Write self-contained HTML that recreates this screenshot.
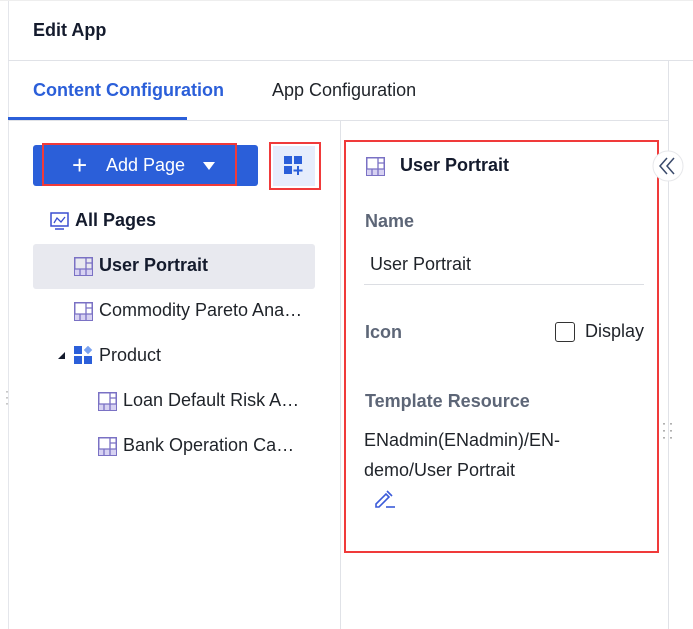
<!DOCTYPE html>
<html><head><style>
body{margin:0;width:693px;height:629px;background:#fff;font-family:"Liberation Sans",sans-serif;position:relative;overflow:hidden;color:#1f2329}
.a{position:absolute}
.t{position:absolute;white-space:nowrap}
</style></head><body>
<div class="a" style="left:8px;top:0;width:1px;height:629px;background:#e4e6eb"></div>
<div class="a" style="left:0;top:0;width:693px;height:1px;background:#eee"></div>
<div class="t" style="left:33px;top:20px;font-size:18px;font-weight:bold;color:#141b2d">Edit App</div>
<div class="a" style="left:8px;top:60px;width:685px;height:1px;background:#e0e2e7"></div>
<div class="t" style="left:33px;top:80px;font-size:18px;font-weight:bold;color:#2b5fd9">Content Configuration</div>
<div class="t" style="left:272px;top:80px;font-size:18px;color:#1f2329">App Configuration</div>
<div class="a" style="left:8px;top:117px;width:179px;height:3px;background:#2b5fd9"></div>
<div class="a" style="left:8px;top:120px;width:660px;height:1px;background:#e0e2e7"></div>
<div class="a" style="left:668px;top:60px;width:1px;height:569px;background:#e0e2e7"></div>
<div class="a" style="left:340px;top:121px;width:1px;height:508px;background:#e0e2e7"></div>

<div class="a" style="left:33px;top:145px;width:225px;height:41px;background:#2b5fd9;border-radius:3px"></div>
<div class="a" style="left:42px;top:143px;width:191px;height:39px;border:2px solid #f03a3a"></div>
<div class="t" style="left:72px;top:152px;font-size:26px;color:#fff;line-height:26px">+</div>
<div class="t" style="left:106px;top:155px;font-size:18px;color:#fff">Add Page</div>
<div class="a" style="left:203px;top:162px;width:0;height:0;border-left:6px solid transparent;border-right:6px solid transparent;border-top:8px solid #fff"></div>
<div class="a" style="left:269px;top:142px;width:48px;height:44px;border:2px solid #f03a3a;background:#fff"></div>
<div class="a" style="left:273px;top:146px;width:42px;height:40px;background:#e6edfc"></div>
<svg class="a" style="left:284px;top:156px" width="20" height="20"><rect x="0" y="0" width="8" height="8" fill="#2b5fd9"/><rect x="10" y="0" width="8" height="8" fill="#2b5fd9"/><rect x="0" y="10" width="8" height="8" fill="#2b5fd9"/><path d="M14 10v9M9.5 14.5h9" stroke="#2b5fd9" stroke-width="2"/></svg>

<svg class="a" style="left:50px;top:212px" width="20" height="20"><rect x="1" y="1" width="17" height="13" fill="none" stroke="#3b4ed0" stroke-width="1.5"/><path d="M4 11l3-5 4 4 4-5" fill="none" stroke="#3b4ed0" stroke-width="1.3"/><path d="M5 17h9" stroke="#3b4ed0" stroke-width="1.5"/></svg>
<div class="t" style="left:75px;top:210px;font-size:18px;font-weight:bold;color:#141b2d">All Pages</div>

<div class="a" style="left:33px;top:244px;width:282px;height:45px;background:#e8e9ef;border-radius:3px"></div>
<svg width="0" height="0" style="position:absolute"><defs><g id="pg"><rect x="0.75" y="0.75" width="17.5" height="17.5" fill="none" stroke="#7a71c4" stroke-width="1.5"/><rect x="1" y="12" width="17" height="6" fill="#d7d2f2"/><path d="M1 12h17M6 12v6M12 12v6M12 1v11M12 6h6" stroke="#7a71c4" stroke-width="1.3"/></g></defs></svg>
<svg class="a" style="left:74px;top:257px" width="19" height="19"><use href="#pg"/></svg>
<div class="t" style="left:99px;top:255px;font-size:18px;font-weight:bold;color:#141b2d">User Portrait</div>
<svg class="a" style="left:74px;top:302px" width="19" height="19"><use href="#pg"/></svg>
<div class="t" style="left:99px;top:300px;font-size:18px;color:#1f2329">Commodity Pareto Ana…</div>
<div class="a" style="left:58px;top:352px;width:0;height:0;border-left:7px solid transparent;border-bottom:7px solid #141b2d"></div>
<svg class="a" style="left:74px;top:346px" width="20" height="20"><rect x="0" y="0" width="8" height="8" fill="#2b5fd9"/><rect x="0" y="10" width="8" height="8" fill="#2b5fd9"/><rect x="10" y="10" width="8" height="8" fill="#2b5fd9"/><rect x="11" y="1" width="6" height="6" fill="#7aa2f0" transform="rotate(45 14 4)"/></svg>
<div class="t" style="left:99px;top:345px;font-size:18px;color:#1f2329">Product</div>
<svg class="a" style="left:98px;top:392px" width="19" height="19"><use href="#pg"/></svg>
<div class="t" style="left:123px;top:390px;font-size:18px;color:#1f2329">Loan Default Risk A…</div>
<svg class="a" style="left:98px;top:437px" width="19" height="19"><use href="#pg"/></svg>
<div class="t" style="left:123px;top:435px;font-size:18px;color:#1f2329">Bank Operation Ca…</div>
<div class="t" style="left:5px;top:388px;font-size:12px;color:#888;line-height:6px">·<br>·<br>·</div>

<div class="a" style="left:344px;top:140px;width:311px;height:409px;border:2px solid #f03a3a"></div>
<svg class="a" style="left:366px;top:157px" width="19" height="19"><use href="#pg"/></svg>
<div class="t" style="left:400px;top:155px;font-size:18px;font-weight:bold;color:#141b2d">User Portrait</div>
<svg class="a" style="left:652px;top:150px" width="32" height="32"><circle cx="16" cy="16" r="15" fill="#fff" stroke="#e6e7ea"/><path d="M15 8l-7 8 7 8M22 8l-7 8 7 8" fill="none" stroke="#3a4a6b" stroke-width="1.5"/></svg>
<div class="t" style="left:365px;top:211px;font-size:18px;font-weight:bold;color:#5d6677">Name</div>
<div class="t" style="left:370px;top:254px;font-size:18px;color:#1f2329">User Portrait</div>
<div class="a" style="left:364px;top:284px;width:280px;height:1px;background:#dcdee3"></div>
<div class="t" style="left:365px;top:322px;font-size:18px;font-weight:bold;color:#5d6677">Icon</div>
<div class="a" style="left:555px;top:322px;width:18px;height:18px;border:1.5px solid #333;border-radius:3px"></div>
<div class="t" style="left:585px;top:321px;font-size:18px;color:#1f2329">Display</div>
<div class="t" style="left:365px;top:391px;font-size:18px;font-weight:bold;color:#5d6677">Template Resource</div>
<div class="t" style="left:364px;top:425px;font-size:18px;color:#1f2329;line-height:30px">ENadmin(ENadmin)/EN-<br>demo/User Portrait</div>
<svg class="a" style="left:374px;top:488px" width="24" height="22"><path d="M2 16l10-10 3 3-10 10H2z" fill="none" stroke="#3b5bd9" stroke-width="1.6"/><path d="M13 3l5 5" stroke="#3b5bd9" stroke-width="1.6"/><path d="M12 19h9" stroke="#3b5bd9" stroke-width="1.6"/></svg>
<div class="t" style="left:662px;top:420px;font-size:12px;color:#555;line-height:7px;letter-spacing:3px">··<br>··<br>··</div>
</body></html>
